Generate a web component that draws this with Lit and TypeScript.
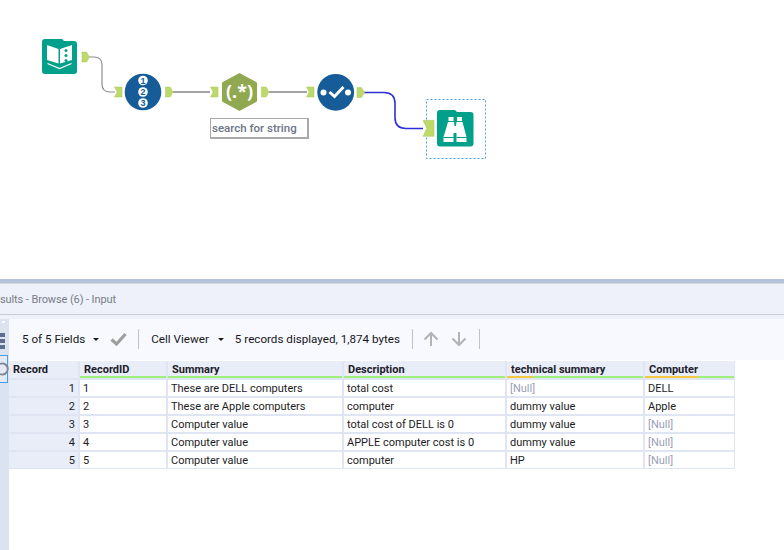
import { LitElement, html, css, svg } from "lit";
import { customElement } from "lit/decorators.js";

const columns = [
  { name: "Record", bar: 0, yellow: 0 },
  { name: "RecordID", bar: 1, yellow: 0 },
  { name: "Summary", bar: 1, yellow: 0 },
  { name: "Description", bar: 1, yellow: 0 },
  { name: "technical summary", bar: 1, yellow: 26 },
  { name: "Computer", bar: 1, yellow: 53 },
];
const rows: string[][] = [
  ["1", "1", "These are DELL computers", "total cost", "[Null]", "DELL"],
  ["2", "2", "These are Apple computers", "computer", "dummy value", "Apple"],
  ["3", "3", "Computer value", "total cost of DELL is 0", "dummy value", "[Null]"],
  ["4", "4", "Computer value", "APPLE computer cost is 0", "dummy value", "[Null]"],
  ["5", "5", "Computer value", "computer", "HP", "[Null]"],
];

const outAnchor = (x: number, y: number) =>
  svg`<path d="M${x} ${y - 5}h4.500l3 5l-3 5h-4.500z" fill="#bdd96a" stroke="#a9c75c" stroke-width=".5"/>`;
const inAnchor = (x: number, y: number, w = 7.5, h = 5) =>
  svg`<path d="M${x} ${y - h}h${w}v${h * 2}h-${w}l${w * 0.35} -${h}z" fill="#bdd96a" stroke="#a9c75c" stroke-width=".5"/>`;

@customElement("app-root")
export class AppRoot extends LitElement {
  static styles = css`
    :host {
      display: block;
      width: 784px;
      height: 550px;
      overflow: hidden;
      background: #fff;
      font-family: Roboto, "Noto Sans", sans-serif;
      color: #1c1c24;
    }
    .canvas {
      position: relative;
      height: 279px;
      background: #fff;
    }
    .canvas svg {
      display: block;
      width: 784px;
      height: 279px;
    }
    .label {
      position: absolute;
      left: 210px;
      top: 118px;
      box-sizing: border-box;
      width: 99px;
      height: 21px;
      border: 1px solid #a9a9a9;
      border-right-width: 2px;
      border-bottom-width: 2px;
      background: #fff;
      font-size: 11.5px;
      line-height: 18px;
      padding-left: 1px;
      color: #6d7486;
      font-weight: 500;
    }
    .sash {
      height: 4px;
      background: #b5c1da;
    }
    .title {
      height: 30px;
      border-top: 1px solid #d5d6da;
      border-bottom: 1px solid #c9ccd3;
      background: #eef1f9;
      font-size: 11px;
      letter-spacing: -0.1px;
      line-height: 31px;
      color: #777c89;
      white-space: nowrap;
    }
    .main {
      display: flex;
      height: 235px;
      background: #eef1f9;
      padding-top: 4px;
    }
    .rail {
      position: relative;
      width: 9px;
      flex: none;
      background: #dce3f0;
    }
    .rail svg {
      position: absolute;
      left: 0;
      top: 0;
    }
    .content {
      flex: 1;
      background: #fff;
      border-top-left-radius: 3px;
    }
    .toolbar {
      display: flex;
      align-items: center;
      height: 40px;
      padding: 0 0 1px 13px;
      background: #f8f9fe;
      font-size: 11.65px;
      color: #16161c;
      white-space: nowrap;
    }
    .caret {
      width: 0;
      height: 0;
      border: 3px solid transparent;
      border-top: 3px solid #1a1a1a;
      border-bottom: 0;
      margin-left: 8px;
    }
    .viewer + .caret { margin-left: 9px; }
    .sep {
      width: 1px;
      height: 20px;
      background: #bfc2c8;
    }
    .toolbar svg {
      display: block;
      flex: none;
    }
    .check { margin-left: 11px; margin-right: 11px; }
    .viewer { margin-left: 12px; }
    .records { margin-left: 11px; margin-right: 12px; }
    .up { margin-left: 10px; }
    .down { margin-left: 12px; margin-right: 12px; }
    .table {
      display: grid;
      grid-template-columns: 69px 86px 174px 161px 136px 89px;
      grid-template-rows: 17px repeat(5, 16px);
      gap: 2px;
      width: max-content;
      margin-top: 1px;
      padding: 0 1px 1px 0;
      background: #dfe5f2;
      font-size: 11px;
      line-height: 18px;
    }
    .head {
      position: relative;
      background: #e9edf8;
      font-weight: 700;
      padding-left: 4px;
      color: #20202a;
    }
    .bar, .yellow {
      position: absolute;
      left: 0;
      bottom: 0;
      height: 2px;
    }
    .bar { width: 100%; background: #9ff07a; }
    .yellow { background: #f5c842; }
    .cell {
      background: #fff;
      padding-left: 3px;
      white-space: nowrap;
      overflow: hidden;
    }
    .rec {
      background: #e9edf8;
      text-align: right;
      padding: 0 3px 0 0;
    }
    .null { color: #9aa0b8; }
  `;

  private canvas() {
    return svg`
      <svg viewBox="0 0 784 279" xmlns="http://www.w3.org/2000/svg">
        <path d="M89 57h5q8 0 8 8v19q0 8 8 8h5" fill="none" stroke="#8e8e8e" stroke-width="1.2"/>
        <path d="M173 92h37M269 92h38" fill="none" stroke="#a3a3a3" stroke-width="1.800"/>
        <path d="M364 92.500h20q11 0 11 11v14q0 11 11 11h17" fill="none" stroke="#2f2fd6" stroke-width="1.600"/>

        <rect x="426.500" y="99.500" width="59" height="59" fill="none" stroke="#3f9cf0" stroke-dasharray="2 2"/>

        <path d="M42 42q0-3 3-3h17l2 2h10q3 0 3 3v27q0 3-3 3H45q-3 0-3-3z" fill="#00a08b"/>
        <path d="M47 45l11.500 4v14.500L47 60zM72 45l-12 4v14.500l12-3.500z" fill="#fff"/>
        <circle cx="66" cy="50.500" r="1.500" fill="#00a08b"/><circle cx="66" cy="55.500" r="1.500" fill="#00a08b"/><circle cx="66" cy="60.500" r="1.500" fill="#00a08b"/>
        <path d="M47.500 63.500l12 5l12-5" fill="none" stroke="#fff" stroke-width="1.200"/>
        ${outAnchor(82, 57)}

        ${inAnchor(114.500, 92)}
        <circle cx="143" cy="92" r="18.300" fill="#155c98"/>
        <circle cx="143" cy="80.500" r="4.800" fill="#fff"/>
        <circle cx="143" cy="92" r="4.800" fill="#fff"/>
        <circle cx="143" cy="103" r="4.800" fill="#fff"/>
        <g font-family="Liberation Sans, sans-serif" font-size="9" font-weight="700" fill="#155c98" text-anchor="middle">
          <text x="143" y="83.700">1</text><text x="143" y="95.200">2</text><text x="143" y="106.200">3</text>
        </g>
        ${outAnchor(165.500, 92)}

        ${inAnchor(210.500, 92)}
        <path d="M239.500 73.500l17 9.200v18.600l-17 9.200l-17-9.200V82.700z" fill="#90a84f" stroke="#90a84f" stroke-width="1" stroke-linejoin="round"/>
        <text x="239.500" y="98" text-anchor="middle" font-family="Noto Sans, sans-serif" font-size="18" font-weight="700" fill="#fff">(.*)</text>
        ${outAnchor(261.500, 92)}

        ${inAnchor(306.500, 92)}
        <circle cx="335.700" cy="92.300" r="18.400" fill="#155c98"/>
        <circle cx="323.500" cy="92.500" r="3" fill="#fff"/>
        <circle cx="348" cy="92.500" r="3" fill="#fff"/>
        <path d="M329.500 92l5 4.500l9-9.500" fill="none" stroke="#fff" stroke-width="3"/>
        ${outAnchor(357, 92.500)}

        ${inAnchor(423, 128.300, 11, 8)}
        <path d="M437 113q0-3 3-3h15l2 2h13.500q3 0 3 3v28.500q0 3-3 3H440q-3 0-3-3z" fill="#00a08b"/>
        <path d="M448.500 117h5v4h-5zM457 117h5v4h-5z" fill="#fff"/>
        <path d="M448 122h6l.5 4h1.500l.5-4h6l4 15v5h-10v-9h-3v9h-10v-5z" fill="#fff"/>
        <path d="M443.500 137.500h10.500M456.500 137.500h10.500" stroke="#00a08b" stroke-width="1"/>
      </svg>`;
  }

  render() {
    return html`
      <div class="canvas">
        ${this.canvas()}
        <div class="label">search for string</div>
      </div>
      <div class="sash"></div>
      <div class="title"><span>sults - Browse (6) - Input</span></div>
      <div class="main">
        <div class="rail">
          <svg width="9" height="231" viewBox="0 0 9 231">
            <rect x="2" y="2" width="3" height="2" fill="#fff"/>
            <path d="M0 14h5v4H0zM0 20h5v4H0zM0 26h5v4H0z" fill="#5d6f8f"/>
            <rect x="-1" y="36.500" width="8.500" height="27" fill="#e3e9f5" stroke="#4a9df0"/>
            <path d="M0 45a5.500 5.500 0 1 1 0 10" fill="none" stroke="#7f8590" stroke-width="1.800"/>
          </svg>
        </div>
        <div class="content">
          <div class="toolbar">
            <span>5 of 5 Fields</span>
            <span class="caret"></span>
            <svg class="check" width="17" height="14" viewBox="0 0 17 14"><path d="M1.500 7.500l5 4.500l9-10" fill="none" stroke="#9e9e9e" stroke-width="3.200"/></svg>
            <span class="sep"></span>
            <span class="viewer">Cell Viewer</span>
            <span class="caret"></span>
            <span class="records">5 records displayed, 1,874 bytes</span>
            <span class="sep"></span>
            <svg class="up" width="16" height="16" viewBox="0 0 16 16"><path d="M8 15V2M1.500 8.500L8 2l6.500 6.500" fill="none" stroke="#b3b3b3" stroke-width="2"/></svg>
            <svg class="down" width="16" height="16" viewBox="0 0 16 16"><path d="M8 1v13M1.500 7.500L8 14l6.500-6.500" fill="none" stroke="#b3b3b3" stroke-width="2"/></svg>
            <span class="sep"></span>
          </div>
          <div class="table">
            ${columns.map(
              (c) => html`<div class="head">${c.name}${c.bar ? html`<span class="bar"></span>` : ""}${c.yellow
                ? html`<span class="yellow" style="width:${c.yellow}px"></span>`
                : ""}</div>`
            )}
            ${rows.map((r) =>
              r.map(
                (v, i) =>
                  html`<div class="cell ${i === 0 ? "rec" : ""} ${v === "[Null]" ? "null" : ""}">${v}</div>`
              )
            )}
          </div>
        </div>
      </div>
    `;
  }
}
